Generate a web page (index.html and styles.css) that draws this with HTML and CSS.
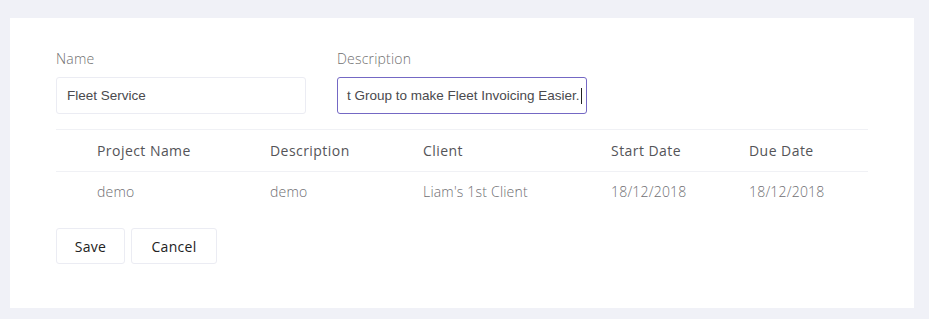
FILE: index.html
```html
<!DOCTYPE html>
<html>
<head>
<meta charset="utf-8">
<link rel="stylesheet" href="styles.css">
</head>
<body>
<div class="card">
  <div class="form-row">
    <div class="field">
      <label class="label">Name</label>
      <div class="input"><span class="input-text">Fleet Service</span></div>
    </div>
    <div class="field">
      <label class="label">Description</label>
      <div class="input focused"><span class="input-text">t Group to make Fleet Invoicing Easier.</span><span class="caret"></span></div>
    </div>
  </div>
  <div class="table">
    <div class="row head">
      <div></div>
      <div>Project Name</div>
      <div>Description</div>
      <div>Client</div>
      <div>Start Date</div>
      <div>Due Date</div>
    </div>
    <div class="row body">
      <div></div>
      <div>demo</div>
      <div>demo</div>
      <div>Liam's 1st Client</div>
      <div>18/12/2018</div>
      <div>18/12/2018</div>
    </div>
  </div>
  <div class="actions">
    <button class="btn btn-save">Save</button>
    <button class="btn btn-cancel">Cancel</button>
  </div>
</div>
</body>
</html>
```
FILE: styles.css
```css
html, body {
  margin: 0;
  padding: 0;
  background: #f0f1f7;
}
body {
  padding: 18px 15px 11px 10px;
  font-family: "Open Sans", "DejaVu Sans", sans-serif;
}
.card {
  background: #ffffff;
  height: 290px;
  box-sizing: border-box;
  padding: 31px 46px 0 46px;
}
.form-row {
  display: flex;
  gap: 31px;
}
.field {
  display: flex;
  flex-direction: column;
  width: 250px;
}
.label {
  font-size: 14px;
  font-weight: 300;
  line-height: 19px;
  letter-spacing: 0.2px;
  color: #6f6f6f;
  margin-bottom: 9px;
}
.input {
  height: 37px;
  box-sizing: border-box;
  border: 1px solid #ebecf3;
  border-radius: 3px;
  display: flex;
  align-items: center;
  padding: 0 10px;
  font-family: "Liberation Sans", Arial, sans-serif;
  font-size: 13.5px;
  color: #4a4a4e;
  white-space: nowrap;
  overflow: hidden;
}
.input.focused {
  border-color: #7468c4;
  padding: 0 2px 0 9px;
}
.input-text {
  white-space: nowrap;
  flex-shrink: 0;
}
.caret {
  flex-shrink: 0;
  width: 1px;
  height: 16px;
  background: #222;
  margin-left: 1px;
}
.table {
  margin-top: 15px;
  width: 812px;
  border-top: 1px solid #f0f1f5;
}
.row {
  display: grid;
  grid-template-columns: 41px 173px 153px 188px 138px 1fr;
  align-items: center;
  font-size: 14px;
}
.row.head {
  height: 41px;
  border-bottom: 1px solid #f0f1f5;
  font-weight: 500;
  letter-spacing: 0.45px;
  color: #545458;
}
.row.body {
  height: 38px;
  font-weight: 300;
  letter-spacing: 0.2px;
  color: #6e6e72;
}
.actions {
  display: flex;
  gap: 6px;
  margin-top: 18px;
}
.btn {
  height: 36px;
  box-sizing: border-box;
  background: #fff;
  border: 1px solid #ebecf3;
  border-radius: 3px;
  font-family: "Open Sans", "DejaVu Sans", sans-serif;
  font-size: 14px;
  letter-spacing: 0.3px;
  color: #222;
  padding: 0;
}
.btn-save {
  width: 69px;
}
.btn-cancel {
  width: 86px;
}
```
